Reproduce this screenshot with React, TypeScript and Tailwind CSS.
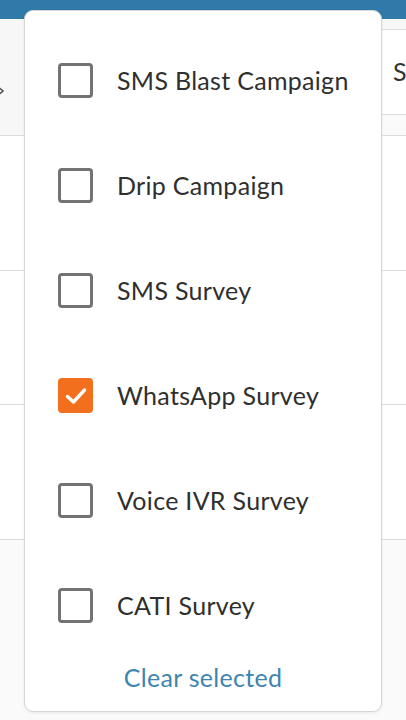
import React from "react";

const items = [
  { label: "SMS Blast Campaign", checked: false },
  { label: "Drip Campaign", checked: false },
  { label: "SMS Survey", checked: false },
  { label: "WhatsApp Survey", checked: true },
  { label: "Voice IVR Survey", checked: false },
  { label: "CATI Survey", checked: false },
];

function Box({ checked }: { checked: boolean }) {
  if (checked) {
    return (
      <div className="w-[35px] h-[35px] rounded-[4px] bg-[#f26f1d] flex items-center justify-center shrink-0">
        <svg width="24" height="24" viewBox="0 0 24 24" fill="none">
          <path d="M3.5 12.5 L9.5 18 L20.5 6" stroke="white" strokeWidth="3.4" strokeLinecap="round" strokeLinejoin="round" />
        </svg>
      </div>
    );
  }
  return <div className="w-[35px] h-[35px] rounded-[4px] border-[3px] border-[#737373] bg-white shrink-0" />;
}

export default function App() {
  return (
    <div className="relative w-[406px] h-[720px] overflow-hidden bg-[#fafafa]" style={{ fontFamily: "Lato, 'Noto Sans', sans-serif" }}>
      <div className="h-[19px] bg-[#2f7aa8]" />
      <div className="flex">
        <div className="w-[30px] flex flex-col">
          <div className="h-[117px] bg-[#f7f7f7] border-b border-[#dcdcdc] relative">
            <svg className="absolute left-[-4px] top-[66px]" width="10" height="12" viewBox="0 0 10 12">
              <path d="M2 2 L7 6 L2 10" stroke="#555" strokeWidth="1.6" fill="none" />
            </svg>
          </div>
          <div className="h-[135px] bg-white border-b border-[#dcdcdc]" />
          <div className="h-[134px] bg-white border-b border-[#dcdcdc]" />
          <div className="h-[135px] bg-white border-b border-[#dcdcdc]" />
        </div>
        <div className="flex-1" />
        <div className="w-[30px] flex flex-col overflow-hidden">
          <div className="h-[11px] bg-[#f7f7f7] border-b border-[#dcdcdc]" />
          <div className="h-[85px] bg-white border-b border-[#dcdcdc] flex items-center pl-[17px] text-[25px] text-[#333] overflow-hidden whitespace-nowrap">S</div>
          <div className="h-[21px] bg-[#fafafa] border-b border-[#dcdcdc]" />
          <div className="h-[135px] bg-white border-b border-[#dcdcdc]" />
          <div className="h-[134px] bg-white border-b border-[#dcdcdc]" />
          <div className="h-[135px] bg-white border-b border-[#dcdcdc]" />
        </div>
      </div>

      <div className="absolute left-[24px] top-[10px] w-[358px] h-[702px] bg-white border border-[#d6d6d6] rounded-[9px] shadow-[0_1px_3px_rgba(0,0,0,0.08)] flex flex-col">
        <div className="flex flex-col pt-[17px]">
          {items.map((it) => (
            <div key={it.label} className="h-[105px] flex items-center pl-[33px] gap-[24px]">
              <Box checked={it.checked} />
              <span className="text-[25px] text-[#2f2f2f] tracking-[0.3px]">{it.label}</span>
            </div>
          ))}
        </div>
        <div className="flex justify-center mt-[1px]">
          <span className="text-[25px] text-[#3d84b0] tracking-[0.3px]">Clear selected</span>
        </div>
      </div>
    </div>
  );
}
